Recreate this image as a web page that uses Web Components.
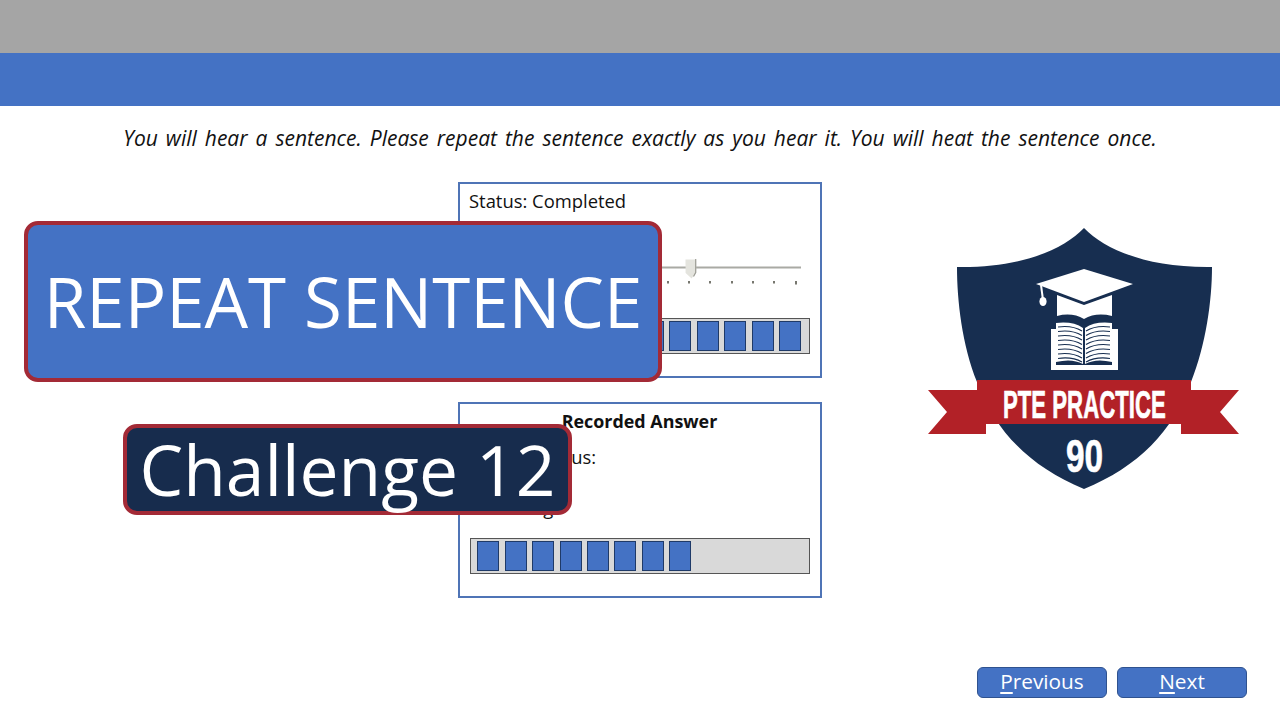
<!DOCTYPE html>
<html lang="en">
<head>
<meta charset="utf-8">
<title>Repeat Sentence</title>
<style>
  html, body { margin: 0; padding: 0; background: #fff; }
  body { width: 1280px; height: 720px; overflow: hidden; font-family: "Open Sans", "Noto Sans", sans-serif; color: #000; }
  pte-slide { display: flex; }
</style>
</head>
<body>
<pte-slide>
  <pte-header></pte-header>
  <pte-instruction>You will hear a sentence. Please repeat the sentence exactly as you hear it. You will heat the sentence once.</pte-instruction>
  <pte-main>
    <pte-panel slot="panels">
      <pte-line>Status: Completed</pte-line>
      <pte-slider></pte-slider>
      <pte-progress segments="12"></pte-progress>
    </pte-panel>
    <pte-panel slot="panels">
      <pte-line center bold>Recorded Answer</pte-line>
      <pte-line gap="12" shift="3">Current Status:</pte-line>
      <pte-line gap="27" shift="3">Recording</pte-line>
      <pte-progress segments="8"></pte-progress>
    </pte-panel>
    <pte-logo slot="logo"></pte-logo>
  </pte-main>
  <pte-footer>
    <pte-button key="P" rest="revious"></pte-button>
    <pte-button key="N" rest="ext"></pte-button>
  </pte-footer>
  <pte-banner style="left:24px;top:221px;width:638px;height:161px;--bg:#4472c4;--fs:69px;--ls:0px">REPEAT SENTENCE</pte-banner>
  <pte-banner style="left:123px;top:424px;width:449px;height:91px;--bg:#172c4d;--fs:69.5px;--ls:0px">Challenge 12</pte-banner>
</pte-slide>

<script>
function define(name, css, html, setup) {
  customElements.define(name, class extends HTMLElement {
    constructor() {
      super();
      const root = this.attachShadow({ mode: 'open' });
      root.innerHTML = '<style>' + css + '</style>' + html;
    }
    connectedCallback() { if (setup) setup(this, this.shadowRoot); }
  });
}

define('pte-slide',
  ':host{display:flex;flex-direction:column;position:relative;width:1280px;height:720px;overflow:hidden;background:#fff}',
  '<slot></slot>');

define('pte-header',
  ':host{display:block;flex:none} .g{height:53px;background:#a5a5a5} .b{height:53px;background:#4472c4}',
  '<div class="g"></div><div class="b"></div>');

define('pte-instruction',
  ':host{display:block;flex:none;height:76px;box-sizing:border-box;padding-top:18px;text-align:center;font-style:italic;font-size:21px;line-height:28px;white-space:nowrap;word-spacing:2.55px;color:#111}',
  '<slot></slot>');

define('pte-main',
  ':host{display:grid;grid-template-columns:458px 364px 1fr;flex:none} .col{grid-column:2;display:flex;flex-direction:column;gap:24px} .logo{grid-column:3;padding:44px 0 0 102px}',
  '<div class="col"><slot name="panels"></slot></div><div class="logo"><slot name="logo"></slot></div>');

define('pte-panel',
  ':host{display:flex;flex-direction:column;box-sizing:border-box;width:364px;height:196px;border:2px solid #4f74b6;padding:5px 10px 22px;background:#fff}',
  '<slot></slot>');

define('pte-line',
  ':host{display:block;font-size:18.4px;line-height:24px;margin-left:-1px;white-space:nowrap;color:#111} :host([center]){text-align:center} :host([bold]){font-weight:700;font-size:17.9px}',
  '<slot></slot>',
  (el) => {
    if (el.hasAttribute('gap')) el.style.marginTop = el.getAttribute('gap') + 'px';
    if (el.hasAttribute('shift')) el.style.marginLeft = '-' + el.getAttribute('shift') + 'px';
  });

define('pte-slider',
  ':host{display:block;margin-top:32px;height:40px} svg{display:block}',
  `<svg width="340" height="40" viewBox="0 0 340 40" aria-hidden="true">
    <line x1="10" y1="22.5" x2="331" y2="22.5" stroke="#a9aaa4" stroke-width="2.2"/>
    <g fill="#77776f">
      <rect x="197" y="36" width="2" height="2.5"/><rect x="218" y="36" width="2" height="2.5"/>
      <rect x="239" y="36" width="2" height="2.5"/><rect x="261" y="36" width="2" height="2.5"/>
      <rect x="282" y="36" width="2" height="2.5"/><rect x="303" y="36" width="2" height="2.5"/>
      <rect x="325" y="36" width="2" height="3.5"/>
    </g>
    <path d="M215.5 14.5h9.5q1.2 0 1.2 1.2v11.5l-4.6 6.3-6-5.5z" fill="#e4e4de"/>
    <path d="M225.7 14v13.5l-2.2 4" fill="none" stroke="#9c9c94" stroke-width="1.2"/>
  </svg>`);

define('pte-progress',
  ':host{display:flex;gap:5.43px;flex:none;box-sizing:border-box;margin-top:auto;height:36px;padding:2px 6.3px;background:#d9d9d9;border:1px solid #555} i{display:block;box-sizing:border-box;width:22px;height:30px;background:#4472c4;border:1px solid #1f3a68}',
  '<div id="s" style="display:contents"></div>',
  (el, root) => {
    const n = +el.getAttribute('segments');
    root.getElementById('s').innerHTML = '<i></i>'.repeat(n);
  });

define('pte-footer',
  ':host{display:flex;justify-content:flex-end;gap:10px;margin-top:auto;padding:0 33px 22px 0}',
  '<slot></slot>');

define('pte-button',
  ':host{display:flex;align-items:center;justify-content:center;box-sizing:border-box;width:130px;height:31px;padding-bottom:2px;border:1px solid #2f528f;border-radius:6px;background:#4472c4;color:#fff;font-size:20.8px;line-height:1} u{text-underline-offset:3px;text-decoration-thickness:2px}',
  '<span><u id="k"></u><span id="r"></span></span>',
  (el, root) => {
    root.getElementById('k').textContent = el.getAttribute('key');
    root.getElementById('r').textContent = el.getAttribute('rest');
  });

define('pte-banner',
  ':host{position:absolute;display:flex;align-items:center;justify-content:center;box-sizing:border-box;border:4px solid #a32a36;border-radius:14px;background:var(--bg);color:#fff;font-size:var(--fs);letter-spacing:var(--ls);white-space:nowrap;line-height:1}',
  '<slot></slot>');

define('pte-logo',
  ':host{display:block;width:320px;height:270px} svg{display:block}',
  `<svg width="320" height="270" viewBox="924 226 320 270" role="img" aria-label="PTE Practice 90 logo">
    <path d="M1084 228C1063 250 1020 268 957 267C957 300 962 345 977 382C995 431 1030 467 1084 489C1138 467 1173 431 1191 382C1206 345 1212 300 1212 267C1149 268 1105 250 1084 228Z" fill="#172e50"/>
    <path d="M977 380H1191V390H1239L1220 412L1239 434H1181V424H986V434H928L947 412L928 390H977Z" fill="#b22127"/>
    <path d="M1084 269L1133 284L1084 302L1036 284Z" fill="#fff"/>
    <path d="M1057 295L1084 305L1112 295V316Q1096 312 1084 319Q1072 312 1057 316Z" fill="#fff"/>
    <path d="M1041 285L1043 300" stroke="#fff" stroke-width="2" fill="none"/>
    <ellipse cx="1043" cy="301.5" rx="3.6" ry="4.6" fill="#fff"/>
    <path d="M1051 329H1056V365H1112V329H1118V370H1051Z" fill="#fff"/>
    <path d="M1056 323Q1073 321 1083 328V364Q1072 358 1056 362Z" fill="#fff"/>
    <path d="M1112 323Q1095 321 1085 328V364Q1096 358 1112 362Z" fill="#fff"/>
    <g fill="none" stroke="#172e50" stroke-width="1.2">
      <path d="M1058 327Q1072 325 1082 331M1058 331.5Q1072 329.5 1082 335.5M1058 336Q1072 334 1082 340M1058 340.5Q1072 338.5 1082 344.5M1058 345Q1072 343 1082 349M1058 349.5Q1072 347.5 1082 353.5M1058 354Q1072 352 1082 358M1058 358.5Q1072 356.5 1082 362"/>
      <path d="M1110 327Q1096 325 1086 331M1110 331.5Q1096 329.5 1086 335.5M1110 336Q1096 334 1086 340M1110 340.5Q1096 338.5 1086 344.5M1110 345Q1096 343 1086 349M1110 349.5Q1096 347.5 1086 353.5M1110 354Q1096 352 1086 358M1110 358.5Q1096 356.5 1086 362"/>
    </g>
    <text transform="translate(1003 418) scale(.584 1)" font-family="'Liberation Sans',sans-serif" font-weight="700" font-size="38" fill="#fff" stroke="#fff" stroke-width=".7">PTE PRACTICE</text>
    <text transform="translate(1066 472) scale(.71 1)" font-family="'Liberation Sans',sans-serif" font-weight="700" font-size="47" fill="#fff" stroke="#fff" stroke-width=".7">90</text>
  </svg>`);
</script>
</body>
</html>
